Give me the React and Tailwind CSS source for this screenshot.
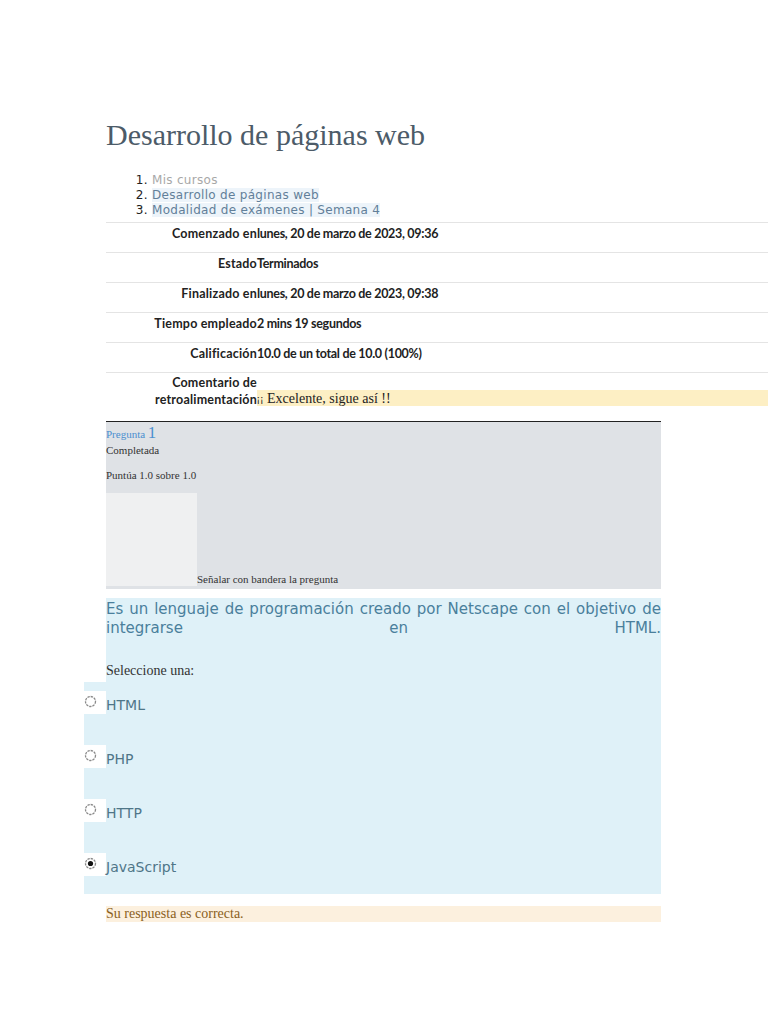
import React from "react";

const filas = [
  { th: "Comenzado en", td: "lunes, 20 de marzo de 2023, 09:36" },
  { th: "Estado", td: "Terminados" },
  { th: "Finalizado en", td: "lunes, 20 de marzo de 2023, 09:38" },
  { th: "Tiempo empleado", td: "2 mins 19 segundos" },
  { th: "Calificación", td: "10.0 de un total de 10.0 (100%)" },
];

const opciones = [
  { label: "HTML", checked: false },
  { label: "PHP", checked: false },
  { label: "HTTP", checked: false },
  { label: "JavaScript", checked: true },
];

const Radio = ({ checked }) => (
  <svg width="13" height="13" viewBox="0 0 13 13">
    <circle cx="6.5" cy="6.5" r="5" fill="#fff" stroke="#8a8a8a" strokeWidth="1.3" strokeDasharray="2.4 0.9" />
    {checked && <circle cx="6.5" cy="6.5" r="2.6" fill="#111" />}
  </svg>
);

const App = () => {
  return (
    <div className="min-h-[1024px] bg-white pt-[117px] pb-[100px]">
      <h1 className="pl-[106px] text-[30px] leading-[36px] text-[#4c5b68] font-['Liberation_Serif',serif]">
        Desarrollo de páginas web
      </h1>

      <ol className="mt-[20px] list-decimal pl-[152px] text-[12px] leading-[15px] tracking-[0.3px] font-['DejaVu_Sans',sans-serif] marker:text-[#222]">
        <li>
          <span className="text-[#a8a8a8]">Mis cursos</span>
        </li>
        <li>
          <span className="bg-[#edf4fa] text-[#627f99]">Desarrollo de páginas web</span>
        </li>
        <li>
          <span className="bg-[#edf4fa] text-[#627f99]">Modalidad de exámenes | Semana 4</span>
        </li>
      </ol>

      {/* resumen del intento */}
      <div className="mt-[4px] ml-[106px] font-['Lato',sans-serif] text-[12.5px] font-bold text-[#222]">
        {filas.map((f) => (
          <div key={f.th} className="flex h-[30px] items-baseline border-t border-[#e4e4e4] pt-[2px] leading-[17px]">
            <div className="w-[151px] shrink-0 text-right tracking-[0.2px]">{f.th}</div>
            <div className="flex-1 tracking-[-0.3px]">{f.td}</div>
          </div>
        ))}
        <div className="flex items-end border-t border-[#e4e4e4] pt-[1px] leading-[17px]">
          <div className="w-[151px] shrink-0 text-right tracking-[0.2px]">
            Comentario de
            <br />
            retroalimentación
          </div>
          <div className="mb-[2px] flex h-[16px] flex-1 items-center bg-[#fdefc4]">
            <span className="text-[10px] font-normal tracking-[1px]">¡¡</span>
            <span className="ml-[3px] font-['Liberation_Serif',serif] text-[14px] font-normal">
              Excelente, sigue así !!
            </span>
          </div>
        </div>
      </div>

      {/* info de la pregunta */}
      <div className="mt-[13px] ml-[106px] w-[555px] border-t border-[#222] bg-[#dfe2e6] pt-[2px] font-['Liberation_Serif',serif] text-[11px] text-[#333]">
        <div className="leading-[18px] text-[#4a8fd0]">
          Pregunta <span className="text-[17px]">1</span>
        </div>
        <div className="leading-[14px]">Completada</div>
        <div className="mt-[11px] leading-[14px]">Puntúa 1.0 sobre 1.0</div>
        <div className="mt-[11px] flex items-end pb-[3px]">
          <div className="h-[93px] w-[91px] bg-[#eff0f1]" />
          <div className="leading-[14px]">Señalar con bandera la pregunta</div>
        </div>
      </div>

      {/* enunciado */}
      <div className="mt-[9px] ml-[106px] w-[555px] bg-[#dff1f8] pt-[2px]">
        <p className="text-justify [text-align-last:justify] font-['DejaVu_Sans',sans-serif] text-[15px] leading-[19px] text-[#4a7f9c]">
          Es un lenguaje de programación creado por Netscape con el objetivo de integrarse en HTML.
        </p>
        <div className="mt-[24px] pb-[2px] font-['Liberation_Serif',serif] text-[14px] leading-[18px] text-[#333]">
          Seleccione una:
        </div>
      </div>

      <div className="ml-[84px] w-[577px] bg-[#dff1f8]">
        {opciones.map((o, i) => (
          <div key={o.label} className={i === 3 ? "flex h-[50px] items-start pt-[9px]" : "flex h-[54px] items-start pt-[9px]"}>
            <div className="flex h-[23px] w-[22px] shrink-0 items-start bg-white pl-[0px] pt-[4px]">
              <Radio checked={o.checked} />
            </div>
            <span className="pt-[5px] font-['DejaVu_Sans',sans-serif] text-[14px] leading-[18px] text-[#4f7688]">
              {o.label}
            </span>
          </div>
        ))}
      </div>

      <div className="mt-[12px] ml-[106px] w-[555px] bg-[#fcf0de] font-['Liberation_Serif',serif] text-[14px] leading-[16px] text-[#8a5f22]">
        Su respuesta es correcta.
      </div>
    </div>
  );
};

export default App;
